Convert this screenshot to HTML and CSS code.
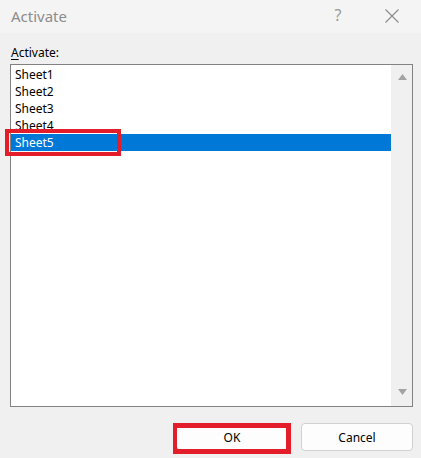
FILE: index.html
```html
<!DOCTYPE html>
<html>
<head>
<meta charset="utf-8">
<link rel="stylesheet" href="styles.css">
</head>
<body>
<div class="dialog">
  <div class="titlebar">
    <span class="title">Activate</span>
    <span class="help">?</span>
    <svg class="close" width="14" height="14" viewBox="0 0 14 14"><path d="M0.5 0.5 L13.5 13.5 M13.5 0.5 L0.5 13.5" stroke="#8a8a8a" stroke-width="1.1" fill="none"/></svg>
  </div>
  <div class="content">
    <div class="label"><u>A</u>ctivate:</div>
    <div class="listbox">
      <ul class="items">
        <li>Sheet1</li>
        <li>Sheet2</li>
        <li>Sheet3</li>
        <li>Sheet4</li>
        <li class="sel">Sheet5</li>
      </ul>
      <div class="scroll">
        <svg width="9" height="6" viewBox="0 0 9 6"><path d="M4.5 0 L9 6 L0 6 Z" fill="#a3a3a3"/></svg>
        <svg width="9" height="6" viewBox="0 0 9 6"><path d="M0 0 L9 0 L4.5 6 Z" fill="#a3a3a3"/></svg>
      </div>
    </div>
    <div class="buttons">
      <button class="btn ok">OK</button>
      <button class="btn">Cancel</button>
    </div>
  </div>
  <div class="mark mark-sheet"></div>
  <div class="mark mark-ok"></div>
</div>
</body>
</html>
```
FILE: styles.css
```css
* { box-sizing: border-box; }
html, body { margin: 0; padding: 0; }
body {
  width: 421px;
  height: 458px;
  overflow: hidden;
  background: #f0f0f0;
  font-family: "Noto Sans", "Open Sans", sans-serif;
  font-size: 12px;
  color: #000;
}
.dialog {
  position: relative;
  width: 421px;
  height: 458px;
  background: #f0f0f0;
}
.titlebar {
  height: 33px;
  background: #f4f4f4;
  display: flex;
  align-items: center;
  padding: 0 22px 1px 11px;
}
.title {
  flex: 1;
  font-size: 15px;
  color: #8c8c8c;
  padding-bottom: 1px;
}
.help {
  font-size: 16px;
  color: #9a9a9a;
  width: 10px;
  text-align: center;
  margin-right: 42px;
  padding-bottom: 2px;
}
.close { display: block; margin-bottom: 1px; }
.content {
  padding: 12px 8px 0 10px;
}
.label {
  line-height: 16px;
  padding-left: 1px;
  margin-bottom: 3px;
}
.label u { text-underline-offset: 2px; }
.listbox {
  height: 343px;
  border: 1px solid #828282;
  background: #fff;
  display: flex;
}
.items {
  flex: 1;
  list-style: none;
  margin: 0;
  padding: 1px 0 0 0;
}
.items li {
  height: 17px;
  line-height: 17px;
  padding-left: 4px;
}
.items li.sel {
  background: #0078d7;
  color: #fff;
}
.scroll {
  width: 21px;
  background: #f0f0f0;
  display: flex;
  flex-direction: column;
  justify-content: space-between;
  align-items: center;
  padding: 9px 0 11px 1px;
}
.scroll svg { display: block; }
.buttons {
  display: flex;
  justify-content: flex-end;
  gap: 13px;
  margin-top: 16px;
}
.btn {
  width: 112px;
  height: 28px;
  border: 1px solid #d0d0d0;
  border-radius: 4px;
  background: #fdfdfd;
  font-family: "Noto Sans", "Open Sans", sans-serif;
  font-size: 12px;
  color: #000;
  padding: 0;
}
.btn.ok {
  border-color: #0067c0;
}
.mark {
  position: absolute;
  border: 4px solid #e31e2a;
}
.mark-sheet {
  left: 5px;
  top: 129px;
  width: 116px;
  height: 27px;
}
.mark-ok {
  left: 173px;
  top: 423px;
  width: 118px;
  height: 31px;
  border-width: 5px 5px 5px 4px;
}
```
